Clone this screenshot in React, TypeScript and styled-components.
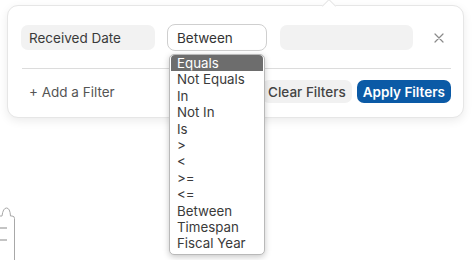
import React from 'react';
import styled, { createGlobalStyle } from 'styled-components';

const operators = [
  'Equals',
  'Not Equals',
  'In',
  'Not In',
  'Is',
  '>',
  '<',
  '>=',
  '<=',
  'Between',
  'Timespan',
  'Fiscal Year',
];

function App() {
  return (
    <>
      <GlobalStyle />
      <Page>
        <Card>
          <Notch />
          <FilterRow>
            <Field width={134}>Received Date</Field>
            <SelectWrap>
              <Select>Between</Select>
              <Menu>
                {operators.map((op, index) => (
                  <MenuItem key={op} active={index === 0}>
                    {op}
                  </MenuItem>
                ))}
              </Menu>
            </SelectWrap>
            <Field width={133} />
            <CloseButton>
              <svg width="10" height="10" viewBox="0 0 10 10">
                <path d="M1 1L9 9M9 1L1 9" stroke="#8a8a8a" strokeWidth="1.2" strokeLinecap="round" />
              </svg>
            </CloseButton>
          </FilterRow>
          <Divider />
          <ActionRow>
            <AddLink>+ Add a Filter</AddLink>
            <Buttons>
              <Button>Clear Filters</Button>
              <Button primary>Apply Filters</Button>
            </Buttons>
          </ActionRow>
        </Card>
        <ClipIcon width="16" height="56" viewBox="0 0 16 56">
          <path
            d="M-1 11 H2 Q3 3 6.5 3 Q10 3 10.5 11 H12 Q14.5 11 14.5 13.5 V56"
            fill="none"
            stroke="#a8a8a8"
            strokeWidth="1"
          />
          <path d="M0 23 H7 M0 35 H7" stroke="#8a8a8a" strokeWidth="1.2" />
        </ClipIcon>
      </Page>
    </>
  );
}

const GlobalStyle = createGlobalStyle`
  body {
    margin: 0;
    background: #ffffff;
    font-family: Inter, "Noto Sans", sans-serif;
  }
`;

const Page = styled.div`
  position: relative;
  width: 474px;
  height: 260px;
  overflow: hidden;
  padding: 5px 0 0 7px;
  box-sizing: border-box;
`;

const Card = styled.div`
  position: relative;
  width: 457px;
  height: 113px;
  box-sizing: border-box;
  padding: 18px 13px 0 13px;
  background: #fff;
  border: 1px solid #e6e6e6;
  border-radius: 11px;
  box-shadow: 0 3px 10px rgba(0, 0, 0, 0.08);
`;

const Notch = styled.div`
  position: absolute;
  top: -5px;
  left: 316px;
  width: 9px;
  height: 9px;
  background: #fff;
  border-left: 1px solid #e6e6e6;
  border-top: 1px solid #e6e6e6;
  transform: rotate(45deg);
`;

const FilterRow = styled.div`
  display: flex;
  align-items: center;
  height: 27px;
`;

const Field = styled.div<{ width: number }>`
  width: ${(p) => p.width}px;
  height: 25px;
  box-sizing: border-box;
  padding-left: 8px;
  display: flex;
  align-items: center;
  background: #f2f2f2;
  border-radius: 7px;
  color: #3a3a3a;
  font-size: 13.5px;
`;

const SelectWrap = styled.div`
  position: relative;
  margin: 0 13px 0 12px;
`;

const Select = styled.div`
  width: 100px;
  height: 27px;
  box-sizing: border-box;
  padding-left: 9px;
  display: flex;
  align-items: center;
  background: #fff;
  border: 1px solid #cfcfcf;
  border-radius: 8px;
  color: #333;
  font-size: 13.5px;
`;

const Menu = styled.div`
  position: absolute;
  top: 30px;
  left: 2px;
  z-index: 5;
  width: 96px;
  box-sizing: border-box;
  padding: 0 1px 2px;
  background: #fff;
  border: 1px solid #b9b9b9;
  border-radius: 5px;
  box-shadow: 0 2px 6px rgba(0, 0, 0, 0.22);
`;

const MenuItem = styled.div<{ active?: boolean }>`
  height: 16.4px;
  line-height: 16.4px;
  padding-left: 6px;
  font-size: 13.3px;
  color: ${(p) => (p.active ? '#fff' : '#3a3a3a')};
  background: ${(p) => (p.active ? '#6d6d6d' : 'transparent')};
  border-radius: ${(p) => (p.active ? '4px 4px 0 0' : '0')};
`;

const CloseButton = styled.div`
  margin-left: 21px;
  display: flex;
  align-items: center;
`;

const Divider = styled.div`
  height: 1px;
  background: #dcdcdc;
  margin: 17px 0 0 1px;
  width: 429px;
`;

const ActionRow = styled.div`
  display: flex;
  align-items: center;
  justify-content: space-between;
  margin-top: 11px;
  width: 430px;
`;

const AddLink = styled.div`
  padding-left: 8px;
  color: #555;
  font-size: 13.5px;
`;

const Buttons = styled.div`
  display: flex;
  gap: 5px;
`;

const Button = styled.div<{ primary?: boolean }>`
  height: 23px;
  box-sizing: border-box;
  padding: 0 6px;
  display: flex;
  align-items: center;
  border-radius: 7px;
  font-size: 13.5px;
  font-weight: ${(p) => (p.primary ? 600 : 500)};
  color: ${(p) => (p.primary ? '#fff' : '#444')};
  background: ${(p) => (p.primary ? '#0b5aa6' : '#f1f1f1')};
`;

const ClipIcon = styled.svg`
  position: absolute;
  left: 0;
  top: 205px;
`;

export default App;
